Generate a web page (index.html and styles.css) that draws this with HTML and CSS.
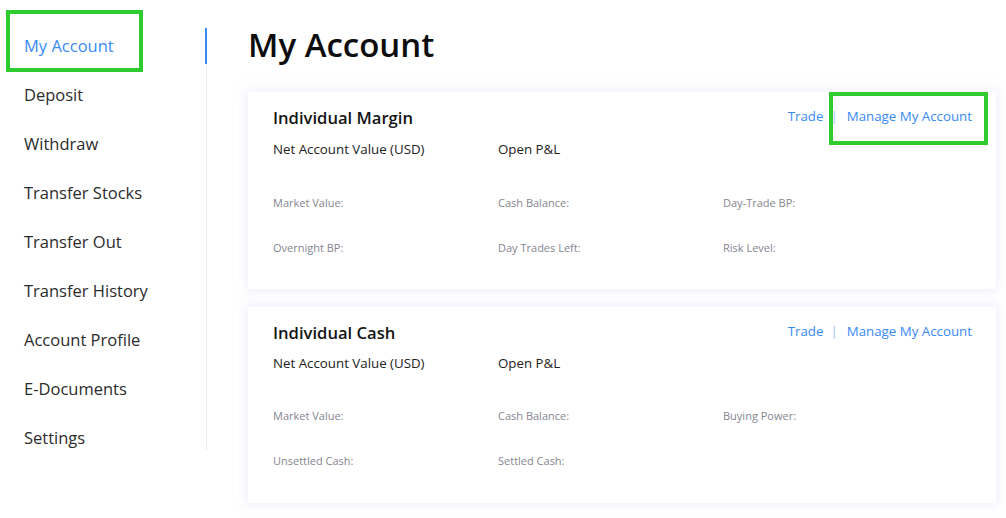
FILE: index.html
```html
<!DOCTYPE html>
<html lang="en">
<head>
<meta charset="utf-8">
<title>My Account</title>
<link rel="stylesheet" href="styles.css">
</head>
<body>
<div class="page">
  <nav class="sidebar">
    <a class="nav-item active">My Account</a>
    <a class="nav-item">Deposit</a>
    <a class="nav-item">Withdraw</a>
    <a class="nav-item">Transfer Stocks</a>
    <a class="nav-item">Transfer Out</a>
    <a class="nav-item">Transfer History</a>
    <a class="nav-item">Account Profile</a>
    <a class="nav-item">E-Documents</a>
    <a class="nav-item">Settings</a>
    <div class="highlight hl-nav"></div>
  </nav>
  <main class="main">
    <h1 class="title">My Account</h1>
    <section class="card">
      <div class="card-head">
        <h2 class="card-title">Individual Margin</h2>
        <div class="links"><a>Trade</a><span class="sep">|</span><a>Manage My Account</a></div>
      </div>
      <div class="summary">
        <span>Net Account Value (USD)</span>
        <span>Open P&amp;L</span>
      </div>
      <div class="fields">
        <span>Market Value:</span><span>Cash Balance:</span><span>Day-Trade BP:</span>
        <span>Overnight BP:</span><span>Day Trades Left:</span><span>Risk Level:</span>
      </div>
      <div class="highlight hl-manage"></div>
    </section>
    <section class="card card-cash">
      <div class="card-head">
        <h2 class="card-title">Individual Cash</h2>
        <div class="links"><a>Trade</a><span class="sep">|</span><a>Manage My Account</a></div>
      </div>
      <div class="summary">
        <span>Net Account Value (USD)</span>
        <span>Open P&amp;L</span>
      </div>
      <div class="fields">
        <span>Market Value:</span><span>Cash Balance:</span><span>Buying Power:</span>
        <span>Unsettled Cash:</span><span>Settled Cash:</span><span></span>
      </div>
    </section>
  </main>
</div>
</body>
</html>
```

FILE: styles.css
```css
* { box-sizing: border-box; }
html, body { margin: 0; padding: 0; background: #fff; }
body {
  font-family: "Open Sans", "Liberation Sans", sans-serif;
  color: #1c1c1c;
  width: 1006px;
  height: 518px;
  overflow: hidden;
}
.page {
  display: flex;
  align-items: flex-start;
}
.sidebar {
  position: relative;
  width: 207px;
  margin-top: 28px;
  border-right: 1px solid #e9edf3;
  display: flex;
  flex-direction: column;
  gap: 13px;
  height: 422px;
}
.nav-item {
  display: block;
  height: 36px;
  line-height: 36px;
  padding-left: 24px;
  font-size: 16.5px;
  color: #2c2c2c;
  position: relative;
}
.nav-item.active { color: #3a8af6; }
.nav-item.active::after {
  content: "";
  position: absolute;
  right: -1px;
  top: 0;
  width: 2px;
  height: 36px;
  background: #3a8af6;
}
.highlight {
  position: absolute;
  border: 4px solid #2fcb2f;
  pointer-events: none;
}
.hl-nav {
  left: 6px;
  top: -18px;
  width: 137px;
  height: 62px;
}
.main {
  flex: 1;
  padding-left: 41px;
  padding-right: 10px;
}
.title {
  margin: 23px 0 0 0;
  font-size: 33px;
  line-height: 44px;
  font-weight: 600;
  color: #0d0d0d;
}
.card {
  position: relative;
  background: #fff;
  margin-top: 25px;
  padding: 13px 24px 0 25px;
  height: 197px;
  box-shadow: 0 0 10px 2px rgba(225, 230, 245, 0.55);
}
.card-cash { margin-top: 18px; height: 196px; }
.card-head {
  display: flex;
  justify-content: space-between;
  align-items: flex-start;
}
.card-title {
  margin: 0;
  font-size: 16.6px;
  line-height: 26px;
  font-weight: 600;
  color: #141414;
}
.links {
  font-size: 13.3px;
  line-height: 22px;
  color: #3a8af6;
  margin-left: 0;
}
.links a { color: #3a8af6; }
.sep { color: #9cc3f7; margin: 0 9px 0 7px; }
.summary {
  display: grid;
  grid-template-columns: 225px 225px;
  font-size: 13.3px;
  line-height: 22px;
  margin-top: 7px;
  color: #222;
}
.card-cash .summary { margin-top: 6px; }
.fields {
  display: grid;
  grid-template-columns: 225px 225px 225px;
  row-gap: 30px;
  margin-top: 35px;
  font-size: 11px;
  line-height: 15px;
  color: #85858f;
}
.card-cash .fields { margin-top: 34px; }
.hl-manage {
  right: 8px;
  top: 0;
  width: 159px;
  height: 53px;
}
```
